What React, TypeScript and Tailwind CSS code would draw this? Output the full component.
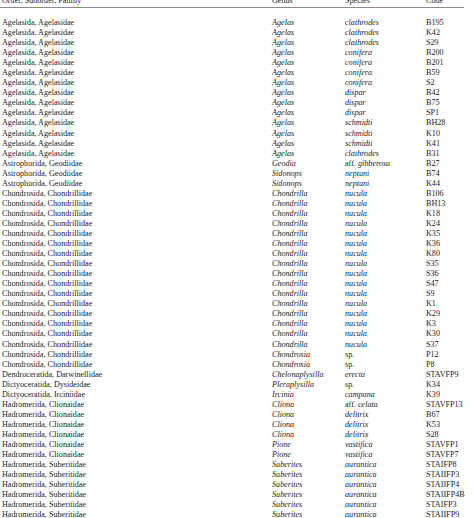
const rows: [string, string, string, string][] = [
  ["Agelasida, Agelasidae", "Agelas", "clathrodes", "B195"],
  ["Agelasida, Agelasidae", "Agelas", "clathrodes", "K42"],
  ["Agelasida, Agelasidae", "Agelas", "clathrodes", "S29"],
  ["Agelasida, Agelasidae", "Agelas", "conifera", "B200"],
  ["Agelasida, Agelasidae", "Agelas", "conifera", "B201"],
  ["Agelasida, Agelasidae", "Agelas", "conifera", "B59"],
  ["Agelasida, Agelasidae", "Agelas", "conifera", "S2"],
  ["Agelasida, Agelasidae", "Agelas", "dispar", "B42"],
  ["Agelasida, Agelasidae", "Agelas", "dispar", "B75"],
  ["Agelasida, Agelasidae", "Agelas", "dispar", "SP1"],
  ["Agelasida, Agelasidae", "Agelas", "schmidti", "BH28"],
  ["Agelasida, Agelasidae", "Agelas", "schmidti", "K10"],
  ["Agelasida, Agelasidae", "Agelas", "schmidti", "K41"],
  ["Agelasida, Agelasidae", "Agelas", "clathrodes", "B31"],
  ["Astrophorida, Geodiidae", "Geodia", "aff. |gibberosa", "B27"],
  ["Astrophorida, Geodiidae", "Sidonops", "neptuni", "B74"],
  ["Astrophorida, Geodiidae", "Sidonops", "neptuni", "K44"],
  ["Chondrosida, Chondrillidae", "Chondrilla", "nucula", "B106"],
  ["Chondrosida, Chondrillidae", "Chondrilla", "nucula", "BH13"],
  ["Chondrosida, Chondrillidae", "Chondrilla", "nucula", "K18"],
  ["Chondrosida, Chondrillidae", "Chondrilla", "nucula", "K24"],
  ["Chondrosida, Chondrillidae", "Chondrilla", "nucula", "K35"],
  ["Chondrosida, Chondrillidae", "Chondrilla", "nucula", "K36"],
  ["Chondrosida, Chondrillidae", "Chondrilla", "nucula", "K80"],
  ["Chondrosida, Chondrillidae", "Chondrilla", "nucula", "S35"],
  ["Chondrosida, Chondrillidae", "Chondrilla", "nucula", "S36"],
  ["Chondrosida, Chondrillidae", "Chondrilla", "nucula", "S47"],
  ["Chondrosida, Chondrillidae", "Chondrilla", "nucula", "S9"],
  ["Chondrosida, Chondrillidae", "Chondrilla", "nucula", "K1"],
  ["Chondrosida, Chondrillidae", "Chondrilla", "nucula", "K29"],
  ["Chondrosida, Chondrillidae", "Chondrilla", "nucula", "K3"],
  ["Chondrosida, Chondrillidae", "Chondrilla", "nucula", "K30"],
  ["Chondrosida, Chondrillidae", "Chondrilla", "nucula", "S37"],
  ["Chondrosida, Chondrillidae", "Chondrosia", "sp.|", "P12"],
  ["Chondrosida, Chondrillidae", "Chondrosia", "sp.|", "P8"],
  ["Dendroceratida, Darwinellidae", "Chelonaplysilla", "erecta", "STAVFP9"],
  ["Dictyoceratida, Dysideidae", "Pleraplysilla", "sp.|", "K34"],
  ["Dictyoceratida, Irciniidae", "Ircinia", "campana", "K39"],
  ["Hadromerida, Clionaidae", "Cliona", "aff. |celata", "STAVFP13"],
  ["Hadromerida, Clionaidae", "Cliona", "delitrix", "B67"],
  ["Hadromerida, Clionaidae", "Cliona", "delitrix", "K53"],
  ["Hadromerida, Clionaidae", "Cliona", "delitrix", "S28"],
  ["Hadromerida, Clionaidae", "Pione", "vastifica", "STAVFP1"],
  ["Hadromerida, Clionaidae", "Pione", "vastifica", "STAVFP7"],
  ["Hadromerida, Suberitidae", "Suberites", "aurantica", "STAIFP8"],
  ["Hadromerida, Suberitidae", "Suberites", "aurantica", "STAIIFP3"],
  ["Hadromerida, Suberitidae", "Suberites", "aurantica", "STAIIFP4"],
  ["Hadromerida, Suberitidae", "Suberites", "aurantica", "STAIIFP4B"],
  ["Hadromerida, Suberitidae", "Suberites", "aurantica", "STAIFP3"],
  ["Hadromerida, Suberitidae", "Suberites", "aurantica", "STAIIFP9"],
];

// species with "|": text before it is roman, text after it italic
function Species({ value }: { value: string }) {
  if (!value.includes("|")) return <span className="italic">{value}</span>;
  const [plain, ital] = value.split("|");
  return (
    <span>
      {plain}
      {ital && <span className="italic">{ital}</span>}
    </span>
  );
}

const cols = "grid grid-cols-[270px_73px_81px_1fr]";

export default function App() {
  return (
    <div className="h-[518px] overflow-hidden bg-white font-['Liberation_Serif',serif] text-[8.15px] leading-[10.04px] text-[#222]">
      <div className="-mt-[4px] w-[464px]">
        <div className={`${cols} h-[12px] pl-[2px] border-b border-[#8a8a8a]`}>
          <div>Order, Suborder, Family</div>
          <div>Genus</div>
          <div>Species</div>
          <div>Code</div>
        </div>
        <div className="pt-[10px]">
          {rows.map((r, i) => (
            <div key={i} className={`${cols} pl-[2px] whitespace-nowrap`}>
              <div>{r[0]}</div>
              <div className="italic">{r[1]}</div>
              <div>
                <Species value={r[2]} />
              </div>
              <div>{r[3]}</div>
            </div>
          ))}
        </div>
      </div>
    </div>
  );
}
